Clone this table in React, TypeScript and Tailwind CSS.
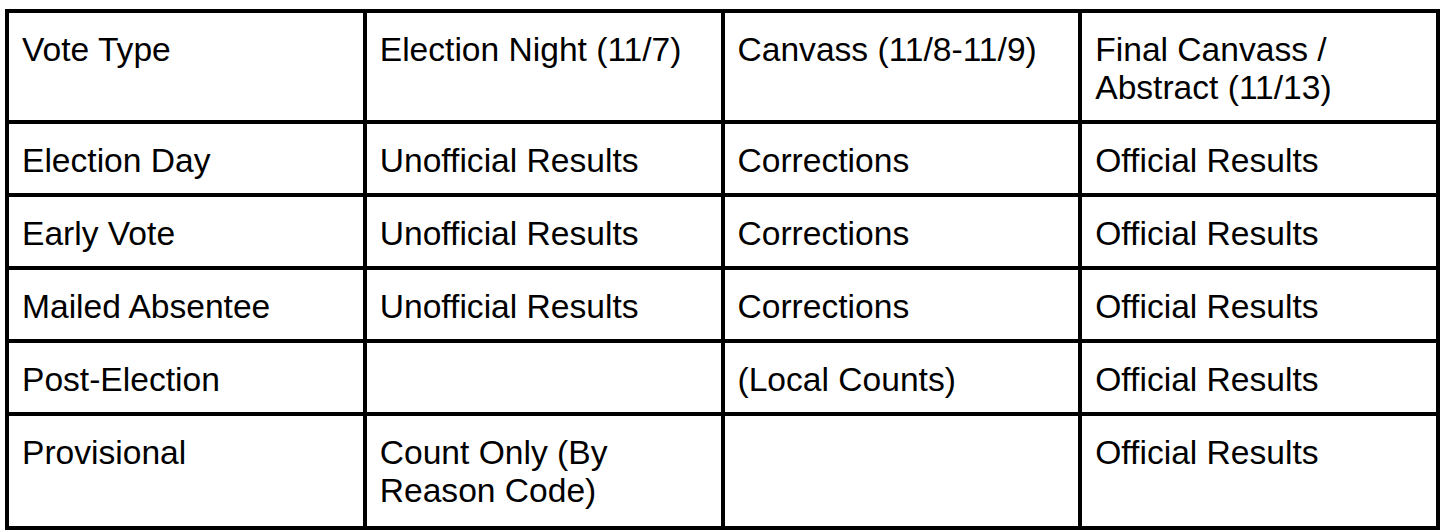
const rows: string[][] = [
  ['Vote Type', 'Election Night (11/7)', 'Canvass (11/8-11/9)', 'Final Canvass / Abstract (11/13)'],
  ['Election Day', 'Unofficial Results', 'Corrections', 'Official Results'],
  ['Early Vote', 'Unofficial Results', 'Corrections', 'Official Results'],
  ['Mailed Absentee', 'Unofficial Results', 'Corrections', 'Official Results'],
  ['Post-Election', '', '(Local Counts)', 'Official Results'],
  ['Provisional', 'Count Only (By Reason Code)', '', 'Official Results'],
];

export default function App() {
  return (
    <div className="min-h-screen bg-white pl-[5px] pt-[9px] font-['Liberation_Sans',Arial,sans-serif] text-black">
      <div className="grid w-[1435px] grid-cols-4 border-l-4 border-t-4 border-black">
        {rows.map((row, rowIndex) =>
          row.map((cell, cellIndex) => (
            <div
              key={`${rowIndex}-${cellIndex}`}
              className={`min-h-[73px] border-b-4 border-r-4 border-black pl-[13px] pr-3 pt-[18px] text-[33.6px] leading-[38px] ${
                rowIndex === rows.length - 1 ? 'pb-[16px]' : 'pb-[13px]'
              }`}
            >
              {cell}
            </div>
          ))
        )}
      </div>
    </div>
  );
}
